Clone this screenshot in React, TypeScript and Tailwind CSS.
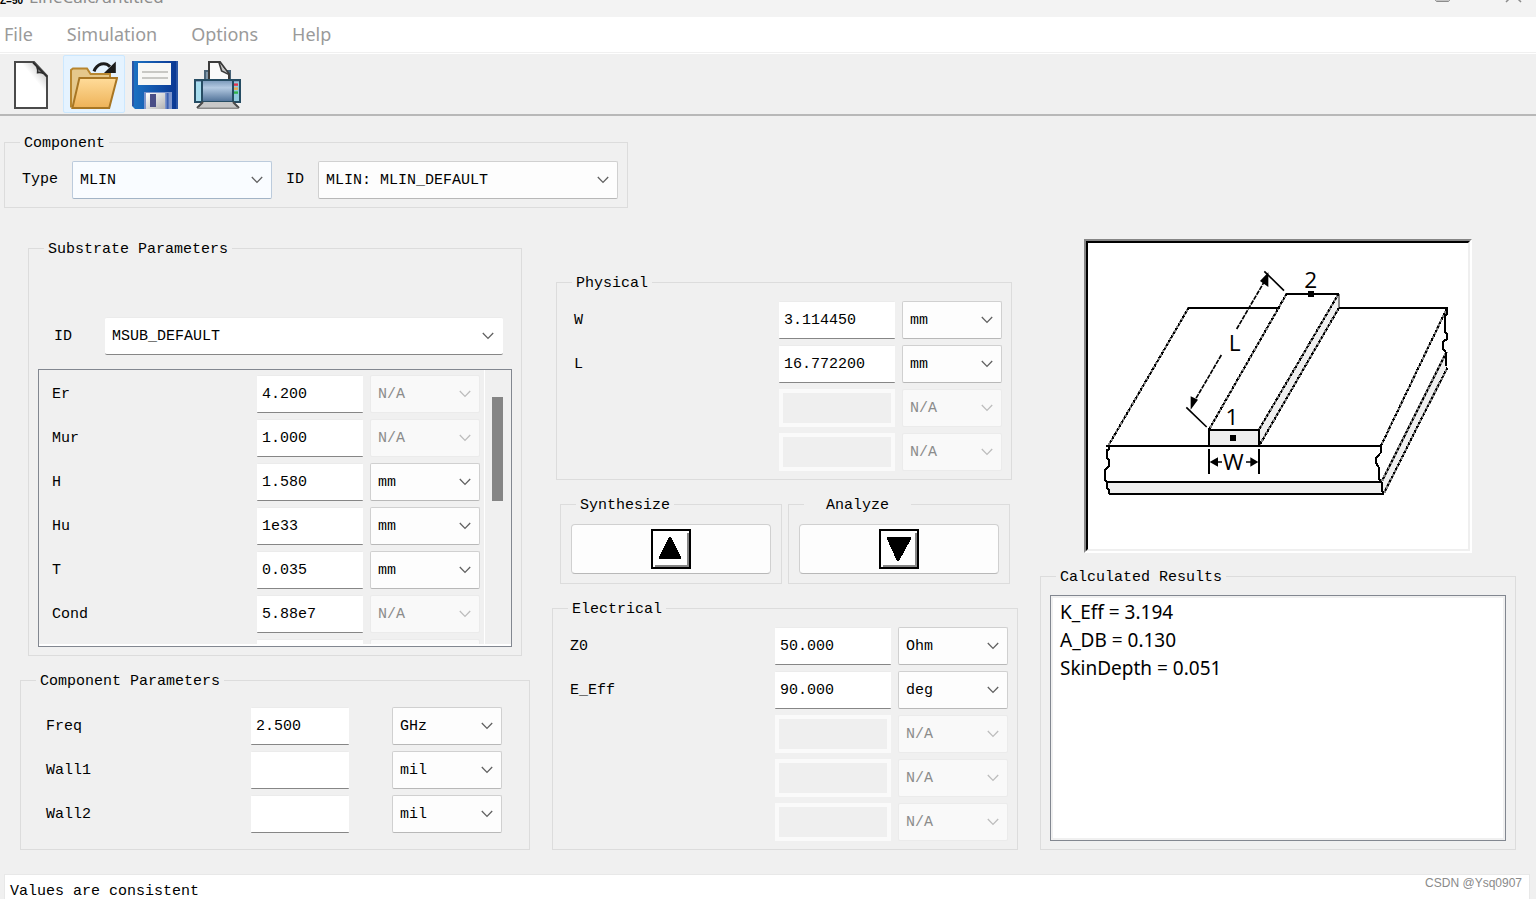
import { useId, useState } from 'react';
import type { ReactNode } from 'react';
import clsx from 'clsx';

interface Param {
  name: string;
  value: string;
  unit: string;
}

const MENUS = ['File', 'Simulation', 'Options', 'Help'];

const SUBSTRATE: Param[] = [
  { name: 'Er', value: '4.200', unit: 'N/A' },
  { name: 'Mur', value: '1.000', unit: 'N/A' },
  { name: 'H', value: '1.580', unit: 'mm' },
  { name: 'Hu', value: '1e33', unit: 'mm' },
  { name: 'T', value: '0.035', unit: 'mm' },
  { name: 'Cond', value: '5.88e7', unit: 'N/A' },
  { name: '', value: '', unit: '' },
];

const COMPONENT: Param[] = [
  { name: 'Freq', value: '2.500', unit: 'GHz' },
  { name: 'Wall1', value: '', unit: 'mil' },
  { name: 'Wall2', value: '', unit: 'mil' },
];

const PHYSICAL: Param[] = [
  { name: 'W', value: '3.114450', unit: 'mm' },
  { name: 'L', value: '16.772200', unit: 'mm' },
  { name: '', value: '', unit: 'N/A' },
  { name: '', value: '', unit: 'N/A' },
];

const ELECTRICAL: Param[] = [
  { name: 'Z0', value: '50.000', unit: 'Ohm' },
  { name: 'E_Eff', value: '90.000', unit: 'deg' },
  { name: '', value: '', unit: 'N/A' },
  { name: '', value: '', unit: 'N/A' },
  { name: '', value: '', unit: 'N/A' },
];

const RESULTS = ['K_Eff = 3.194', 'A_DB = 0.130', 'SkinDepth = 0.051'];

interface GroupProps {
  title: string;
  className?: string;
  bodyClass: string;
  legendPad?: string;
  children: ReactNode;
}

function Group({ title, className, bodyClass, legendPad = 'px-1', children }: GroupProps) {
  return (
    <fieldset className={clsx('min-w-0 border border-[#dcdcdc]', className)}>
      <legend className={clsx('ml-[15px] h-5 leading-6', legendPad)}>{title}</legend>
      <div className={bodyClass}>{children}</div>
    </fieldset>
  );
}

interface ComboProps {
  id?: string;
  label?: string;
  value: string;
  disabled?: boolean;
  className?: string;
  tone?: string;
}

function Combo({ id, label, value, disabled, className, tone }: ComboProps) {
  return (
    <div className={clsx('relative h-[38px] shrink-0', className)}>
      <select
        id={id}
        aria-label={label}
        disabled={disabled}
        defaultValue={value}
        className={clsx(
          'h-full w-full appearance-none rounded-[2px] pl-[7px] pr-7 pt-0.5 opacity-100 outline-none',
          disabled
            ? 'border border-[#ebebeb] bg-[#f9f9f9] text-[#8c8c8c]'
            : (tone ?? 'border border-[#d0d0d0] border-b-[#b8b8b8] bg-[#fdfdfd]'),
        )}
      >
        <option>{value}</option>
      </select>
      <svg
        viewBox="0 0 12 8"
        className={clsx(
          'pointer-events-none absolute right-[9px] top-[15px] h-2 w-3 fill-none',
          disabled ? 'stroke-[#bdbdbd]' : 'stroke-[#606060]',
        )}
        strokeWidth="1.3"
      >
        <path d="M0.8 1 6 6.4 11.2 1" />
      </svg>
    </div>
  );
}

interface ParamRowProps {
  param: Param;
  inputClass: string;
  comboClass: string;
}

function ParamRow({ param, inputClass, comboClass }: ParamRowProps) {
  const id = useId();
  const [value, setValue] = useState(param.value);
  const empty = param.name === '' && param.unit === 'N/A';

  return (
    <div className="flex h-[38px] shrink-0 items-center">
      <label htmlFor={id} className="flex-1 pt-0.5">
        {param.name}
      </label>
      <input
        id={id}
        value={value}
        disabled={empty}
        onChange={(e) => setValue(e.target.value)}
        className={clsx(
          'h-full px-[5px] outline-none',
          empty
            ? 'border-4 border-[#fafafa] bg-[#efefef]'
            : 'rounded-[1px] border-y border-t-[#ebebeb] border-b-[#868686] bg-white',
          inputClass,
        )}
      />
      <Combo
        label={`${param.name} unit`}
        value={param.unit}
        disabled={param.unit === 'N/A' || param.unit === ''}
        className={comboClass}
      />
    </div>
  );
}

function NewIcon() {
  return (
    <svg viewBox="0 0 24 24" className="size-12">
      <defs>
        <linearGradient id="sheet" x1="0.9" y1="0" x2="0.4" y2="0.6">
          <stop offset="0" stopColor="#b5b5b5" />
          <stop offset="0.6" stopColor="#ffffff" />
        </linearGradient>
      </defs>
      <path d="M3.5.5H13L19.5 7.5V23.5H3.5Z" fill="url(#sheet)" stroke="#4a4a4a" />
      <path d="M12.5.8C14.5 2 15 4 14.8 5.8 16.8 5.6 18.6 6.5 19.4 7.8Z" fill="#8a8a8a" stroke="#2d2d2d" strokeWidth=".8" />
    </svg>
  );
}

function OpenIcon() {
  return (
    <svg viewBox="0 0 24 24" className="size-12">
      <defs>
        <linearGradient id="folder" x1="0" y1="0" x2="0" y2="1">
          <stop offset="0" stopColor="#ffdc9a" />
          <stop offset="1" stopColor="#eeb258" />
        </linearGradient>
      </defs>
      <path d="M.5 23.3V4.5L1.5 3.7H8.5L10.3 6.5H20V9" fill="#e5c88c" stroke="#b8862f" />
      <path d="M4.7 8.5H23.5L19.6 23.5H1.2Z" fill="url(#folder)" stroke="#a87624" />
      <path d="M12 5.2C13.5 1.2 17.5.2 20 2.8" fill="none" stroke="#1c1c1c" strokeWidth="1.5" />
      <path d="M22.9.3V6H17Z" fill="#1c1c1c" />
    </svg>
  );
}

function SaveIcon() {
  return (
    <svg viewBox="0 0 24 24" className="size-12">
      <defs>
        <linearGradient id="disk" x1="0" y1="0" x2="1" y2="0">
          <stop offset="0" stopColor="#1c74c4" />
          <stop offset="1" stopColor="#0a3591" />
        </linearGradient>
        <linearGradient id="shutter" x1="0" y1="0" x2="1" y2="1">
          <stop offset="0" stopColor="#ffffff" />
          <stop offset="1" stopColor="#b4b4b4" />
        </linearGradient>
      </defs>
      <path d="M0 0H23V24H1.5L0 22.5Z" fill="url(#disk)" />
      <path d="M22.5 0V24M.5 0V22.5" stroke="#2b56a5" />
      <path d="M3 1H19.5V12H3Z" fill="#f7f7f5" />
      <path d="M5 5.5H18M5 8.5H18" stroke="#c8c8c4" />
      <path d="M6 15.5H20V24H6Z" fill="#7d95cc" />
      <path d="M7 16H16.5V24H7Z" fill="url(#shutter)" />
      <path d="M9 16.5H12V23H9Z" fill="#4a4e86" />
      <path d="M17.8 16V24" stroke="#3d61b0" />
    </svg>
  );
}

function PrintIcon() {
  return (
    <svg viewBox="0 0 24 24" className="size-12">
      <defs>
        <linearGradient id="printer" x1="0" y1="0" x2="0" y2="1">
          <stop offset="0" stopColor="#7796b8" />
          <stop offset="0.35" stopColor="#b4cae2" />
          <stop offset="1" stopColor="#4d6f96" />
        </linearGradient>
      </defs>
      <path d="M5.5 5H18V10H5.5Z" fill="#8197a9" stroke="#4a6478" />
      <path d="M7.5 10V.5H13L17.5 6.5V10Z" fill="#fafafa" stroke="#3b3b3b" />
      <path d="M12.5.8 13.8 5 17.3 6.7" fill="#c6c6c6" stroke="#3b3b3b" strokeWidth=".8" />
      <path d="M.5 9.5H23V20.5H.5Z" fill="url(#printer)" stroke="#264c63" />
      <path d="M1 10.5H3.5V20H1Z" fill="#a6dcee" />
      <path d="M20 10.5H22.5V20H20Z" fill="#91cade" />
      <path d="M4 10V20M19.5 10V20" stroke="#264c63" />
      <path d="M20 11.2H22V12.4H20Z" fill="#e4324c" />
      <path d="M20 13.2H22V14.4H20Z" fill="#eda94c" />
      <path d="M20 15.2H22V16.4H20Z" fill="#31b44b" />
      <path d="M4.5 20.5H19.5L22.5 23.7H1.5Z" fill="#c8c8c8" />
      <path d="M4.5 20.5 1.5 23.5M22.5 23.5 19.5 20.5" fill="none" stroke="#4b4b4b" />
      <path d="M2 23.6H22" stroke="#8a8a8a" strokeWidth=".8" />
    </svg>
  );
}

const TOOLS = [
  { name: 'New', icon: <NewIcon /> },
  { name: 'Open', icon: <OpenIcon /> },
  { name: 'Save', icon: <SaveIcon /> },
  { name: 'Print', icon: <PrintIcon /> },
];

function ArrowIcon({ down = false }: { down?: boolean }) {
  return (
    <svg viewBox="0 0 40 40" className="mx-auto size-10" shapeRendering="crispEdges">
      <path d="M1 1H39V39H1Z" fill="#fff" stroke="#000" strokeWidth="2" />
      <path d="M4 37H37V4" fill="none" stroke="#868686" strokeWidth="2" />
      {down ? <path d="M8 8H32V10L20 32H18L8 10Z" /> : <path d="M8 30V28L18 8H20L30 28V30Z" />}
    </svg>
  );
}

const SLOPES = [
  'M326 218 86 630',
  'M620 176 388 582',
  'M776 176 538 582',
  'M776 220 540 628',
  'M1100 222 904 630',
  'M1100 350 906 738',
  'M1102 398 912 774',
];

function MicrostripDiagram() {
  return (
    <div className="w-[388px] border-2 border-white border-l-[#868686] border-t-[#868686]">
      <div className="border-2 border-[#efefef] border-l-black border-t-black bg-white">
        <svg viewBox="24 24 1140 918" className="block w-full" role="img" aria-label="Microstrip line">
          <g shapeRendering="crispEdges">
            <path d="M776 176V222L540 632 538 582Z" fill="#efefef" />
            <path d="M387 584H537V632H387Z" fill="#efefef" />
            <path d="M84 742H904V776H88Z" fill="#efefef" />
            <path d="M1100 350 1102 396 912 774 904 738Z" fill="#efefef" />
            <path d="M777 178V220" stroke="#868686" strokeWidth="6" />
            {SLOPES.map((d) => (
              <g key={d} fill="none">
                <path d={d} stroke="#868686" strokeWidth="7" />
                <path d={d} stroke="#000" strokeWidth="6" strokeDasharray="7 7" />
              </g>
            ))}
            <g fill="none" stroke="#000" strokeWidth="6">
              <path d="M324 218H600M776 218H1104M618 176H778M78 632H904M82 741H904M86 776H912" />
              <path d="M387 632V584H537V632" />
              <path d="M87 632V642L81 646V670L87 676V694L75 704V736L81 742V760L88 766V776" />
              <path d="M903 630V652L887 670V682L897 698V732L905 742V766L912 776" />
              <path d="M1101 216V236L1095 242V290L1101 298V312L1089 320V342L1099 354V394" />
              <path d="M387 642V718M537 642V718" />
            </g>
            <path d="M684 168H702V186H684ZM450 600H468V618H450Z" />
          </g>
          <g fill="none" stroke="#000" strokeWidth="5">
            <path d="M470 282 554 138M424 360 340 504" strokeDasharray="14 3" />
            <path d="M553 109 612 167M319 517 380 576" />
            <path d="M400 681H426M498 681H524" />
          </g>
          <path d="M565 112V156L540 138ZM332 484 354 494 332 524Z" />
          <path d="M389 681 414 667V695ZM535 681 511 667V695Z" />
          <g className="font-['Open_Sans',sans-serif] text-[68px]" textAnchor="middle">
            <text x="692" y="160">2</text>
            <text x="464" y="347">L</text>
            <text x="456" y="570">1</text>
            <text x="460" y="706">W</text>
          </g>
        </svg>
      </div>
    </div>
  );
}

export default function App() {
  return (
    <div className="relative flex h-screen flex-col overflow-hidden bg-[#f0f0f0] font-['Liberation_Mono',monospace] text-[15px] text-black">
      <header className="flex h-[17px] shrink-0 items-end justify-between overflow-hidden bg-[#f3f3f3] font-['Noto_Sans',sans-serif] text-[#8c8c8c]">
        <div className="flex h-[30px] shrink-0 items-start gap-1.5 leading-5">
          <span className="pt-1 font-['Liberation_Sans',sans-serif] text-[10px] font-bold text-black">Z=50</span>
          <h1 className="text-[17px] leading-5">LineCalc/untitled</h1>
        </div>
        <svg viewBox="0 0 102 17" className="h-[17px] w-[102px] fill-none stroke-[#8c8c8c]">
          <path d="M1.5 -4V0.5L2.5 1.5H14.5L15.5 0.5V-4" fill="#c4c4c4" />
          <path d="M72 2 79.5 -5.5 87 2" strokeWidth="1.5" />
        </svg>
      </header>

      <nav className="flex h-9 shrink-0 gap-[34px] border-b border-[#f0f0f0] bg-white px-1 pb-0.5 font-['Noto_Sans',sans-serif] text-lg text-[#9a9a9a]">
        {MENUS.map((menu) => (
          <button key={menu} type="button">
            {menu}
          </button>
        ))}
      </nav>

      <div className="flex h-[63px] shrink-0 items-center border-b-2 border-t border-b-[#b8b8b8] border-t-white px-px">
        {TOOLS.map((tool) => (
          <button
            key={tool.name}
            type="button"
            aria-label={tool.name}
            className={clsx(
              'flex h-[58px] w-[62px] items-center justify-center rounded-[2px] border pt-0.5',
              tool.name === 'Open' ? 'border-[#cce8ff] bg-[#e5f3ff]' : 'border-transparent',
            )}
          >
            {tool.icon}
          </button>
        ))}
      </div>

      <main className="flex-1 pt-4">
        <Group
          title="Component"
          className="ml-1 w-[624px]"
          bodyClass="flex items-center gap-[14px] pb-2 pl-[17px] pr-[9px] pt-[9px]"
        >
          <label htmlFor="type">Type</label>
          <Combo
            id="type"
            value="MLIN"
            className="w-[200px]"
            tone="border border-[#bccbdc] border-b-[#a3b4c6] bg-[#f9fcff]"
          />
          <label htmlFor="component-id">ID</label>
          <Combo id="component-id" value="MLIN: MLIN_DEFAULT" className="flex-1" />
        </Group>

        <div className="grid grid-cols-[540fr_490fr_506fr] pt-[30px]">
          <div className="flex flex-col gap-[14px] pl-5 pr-[10px]">
            <Group title="Substrate Parameters" className="mx-2" bodyClass="px-[9px] pb-2">
              <div className="flex items-center justify-between pl-4 pr-[9px] pt-[59px]">
                <label htmlFor="substrate-id" className="pt-0.5">
                  ID
                </label>
                <Combo
                  id="substrate-id"
                  value="MSUB_DEFAULT"
                  className="w-[398px]"
                  tone="border-y border-t-[#ebebeb] border-b-[#868686] bg-white"
                />
              </div>
              <div className="mt-[14px] flex h-[278px] border border-[#828790]">
                <div className="flex flex-1 flex-col gap-1.5 overflow-hidden border-b-2 border-r border-white pb-px pl-[13px] pr-1 pt-[5px]">
                  {SUBSTRATE.map((param) => (
                    <ParamRow key={param.name} param={param} inputClass="w-[106px]" comboClass="ml-[7px] w-[110px]" />
                  ))}
                </div>
                <div className="w-[26px] border-b-2 border-white pl-[7px] pt-[27px]">
                  <div className="h-[104px] w-[11px] bg-[#858585]" />
                </div>
              </div>
            </Group>

            <Group
              title="Component Parameters"
              bodyClass="flex flex-col gap-1.5 pb-4 pl-[25px] pr-[27px] pt-[17px]"
            >
              {COMPONENT.map((param) => (
                <ParamRow key={param.name} param={param} inputClass="w-[98px]" comboClass="ml-[43px] w-[110px]" />
              ))}
            </Group>
          </div>

          <div className="flex flex-col gap-[14px] px-3 pt-[34px]">
            <Group
              title="Physical"
              className="ml-1 mr-1.5"
              bodyClass="flex flex-col gap-1.5 pb-2 pl-[17px] pr-[9px] pt-[9px]"
            >
              {PHYSICAL.map((param, i) => (
                <ParamRow key={i} param={param} inputClass="w-[116px]" comboClass="ml-[7px] w-[100px]" />
              ))}
            </Group>

            <div className="flex gap-1.5 px-2">
              <Group title="Synthesize" className="flex-1" bodyClass="px-[10px] pb-[9px] pt-[10px]">
                <button
                  type="button"
                  aria-label="Synthesize"
                  className="block h-[50px] w-full rounded-[4px] border border-[#d0d0d0] border-b-[#b8b8b8] bg-[#fdfdfd]"
                >
                  <ArrowIcon />
                </button>
              </Group>
              <Group
                title="Analyze"
                className="flex-1"
                bodyClass="px-[10px] pb-[9px] pt-[10px]"
                legendPad="px-[22px]"
              >
                <button
                  type="button"
                  aria-label="Analyze"
                  className="block h-[50px] w-full rounded-[4px] border border-[#d0d0d0] border-b-[#b8b8b8] bg-[#fdfdfd]"
                >
                  <ArrowIcon down />
                </button>
              </Group>
            </div>

            <Group title="Electrical" bodyClass="flex flex-col gap-1.5 pb-2 pl-[17px] pr-[9px] pt-[9px]">
              {ELECTRICAL.map((param, i) => (
                <ParamRow key={i} param={param} inputClass="w-[116px]" comboClass="ml-[7px] w-[110px]" />
              ))}
            </Group>
          </div>

          <div className="flex flex-col justify-between pl-[10px] pr-5 pt-px">
            <div className="flex pl-11">
              <MicrostripDiagram />
            </div>
            <Group title="Calculated Results" bodyClass="px-[9px] pb-2 pt-[9px]">
              <ul className="h-[246px] border border-[#828790] bg-white px-[9px] pt-0.5 font-['Noto_Sans',sans-serif] text-[19px] leading-7 shadow-[inset_0_0_0_2px_#f0f0f0]">
                {RESULTS.map((line) => (
                  <li key={line}>{line}</li>
                ))}
              </ul>
            </Group>
          </div>
        </div>
      </main>

      <footer className="ml-1 mr-1.5 h-[25px] shrink-0 border border-b-0 border-[#e8e8e8] bg-white px-[5px] pt-[9px] leading-4">
        <p>Values are consistent</p>
      </footer>
      <span className="absolute bottom-2 right-[14px] font-['Liberation_Sans',sans-serif] text-xs text-[#8a8a8a]">
        CSDN @Ysq0907
      </span>
    </div>
  );
}
